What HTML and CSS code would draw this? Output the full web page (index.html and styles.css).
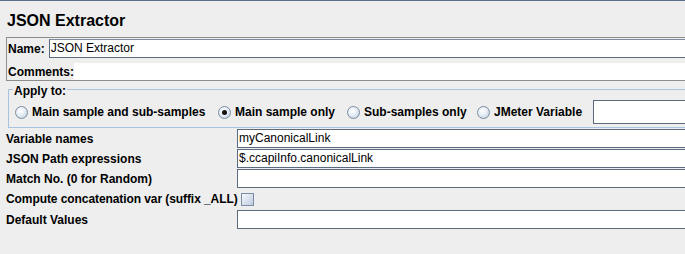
FILE: index.html
```html
<!DOCTYPE html>
<html>
<head>
<meta charset="utf-8">
<link rel="stylesheet" href="styles.css">
</head>
<body>
<h1 class="title">JSON Extractor</h1>
<div class="name-panel">
  <div class="name-row">
    <span class="lbl">Name:</span>
    <div class="field name-field">JSON Extractor</div>
  </div>
  <div class="comments-row">
    <span class="lbl">Comments:</span>
    <div class="comments"></div>
  </div>
</div>
<fieldset class="apply">
  <legend class="legend">Apply to:</legend>
  <div class="radios">
    <span class="opt opt-1"><span class="radio"></span>Main sample and sub-samples</span>
    <span class="opt opt-2"><span class="radio checked"></span>Main sample only</span>
    <span class="opt opt-3"><span class="radio"></span>Sub-samples only</span>
    <span class="opt opt-4"><span class="radio"></span>JMeter Variable</span>
    <div class="field var-field"></div>
  </div>
</fieldset>
<div class="form">
  <span class="lbl">Variable names</span>
  <div class="field">myCanonicalLink</div>
  <span class="lbl">JSON Path expressions</span>
  <div class="field">$.ccapiInfo.canonicalLink</div>
  <span class="lbl">Match No. (0 for Random)</span>
  <div class="field"></div>
  <span class="lbl lbl-tight">Compute concatenation var (suffix _ALL)</span>
  <div class="check-cell"><span class="checkbox"></span></div>
  <span class="lbl">Default Values</span>
  <div class="field"></div>
</div>
</body>
</html>
```
FILE: styles.css
```css
html, body {
  margin: 0;
  height: 100%;
}
body {
  box-sizing: border-box;
  background: #eeeeee;
  overflow: hidden;
  border-top: 1px solid #5d6f86;
  font-family: "Liberation Sans", Arial, sans-serif;
  font-size: 12px;
  line-height: 14px;
  color: #000;
}
.title {
  margin: 0;
  padding: 10px 0 0 7px;
  font-size: 16px;
  font-weight: bold;
  line-height: 20px;
}
.lbl {
  font-weight: bold;
  white-space: nowrap;
}
.lbl-tight {
  letter-spacing: -0.08px;
}
.field {
  box-sizing: border-box;
  height: 19px;
  background: #fff;
  border: 1px solid #5a6b80;
  padding: 0 1px;
  line-height: 17px;
  white-space: nowrap;
  overflow: hidden;
}
.name-panel {
  margin: 6px -30px 0 6px;
  border: 1px solid #8e8e8e;
  padding: 1px 0 0 1px;
}
.name-row {
  display: flex;
  align-items: center;
  height: 19px;
}
.name-field {
  flex: 1;
  margin-left: 4px;
  border-top-color: #7d8da0;
}
.comments-row {
  display: flex;
  align-items: center;
  height: 17px;
  margin-top: 5px;
}
.comments {
  flex: 1;
  align-self: stretch;
  background: #fff;
}
.apply {
  margin: 0 -30px 0 8px;
  border: 1px solid #a9c3de;
  padding: 2px 0 3px 4px;
  min-width: 0;
}
.legend {
  padding: 3px 1px 0;
  font-weight: bold;
  line-height: 14px;
}
.radios {
  display: flex;
  align-items: center;
  height: 24px;
  margin-left: 2px;
}
.opt {
  display: flex;
  align-items: center;
  gap: 4px;
  font-weight: bold;
  white-space: nowrap;
  flex: none;
}
.opt-1 { width: 203px; }
.opt-2 { width: 129px; }
.opt-3 { width: 130px; }
.opt-4 { width: 116px; }
.radio {
  position: relative;
  box-sizing: border-box;
  width: 13px;
  height: 13px;
  flex: none;
  border-radius: 50%;
  border: 1px solid #7b8c9f;
  background: radial-gradient(circle at 40% 35%, #ffffff 0%, #e6edf5 45%, #b8c8da 100%);
}
.radio.checked::after {
  content: "";
  position: absolute;
  left: 3px;
  top: 3px;
  width: 5px;
  height: 5px;
  border-radius: 50%;
  background: #111;
}
.var-field {
  flex: 1;
  height: 24px;
}
.form {
  display: grid;
  grid-template-columns: 231px 1fr;
  grid-template-rows: 19px 19px 19px 20px 19px;
  row-gap: 1px;
  margin: 1px -30px 0 6px;
}
.form .lbl {
  align-self: center;
}
.check-cell {
  display: flex;
  align-items: center;
}
.checkbox {
  box-sizing: border-box;
  width: 13px;
  height: 13px;
  margin-left: 4px;
  border: 1px solid #7a8ea5;
  background: linear-gradient(135deg, #f4f8fc 0%, #d9e3ee 50%, #bccbdc 100%);
}
```
